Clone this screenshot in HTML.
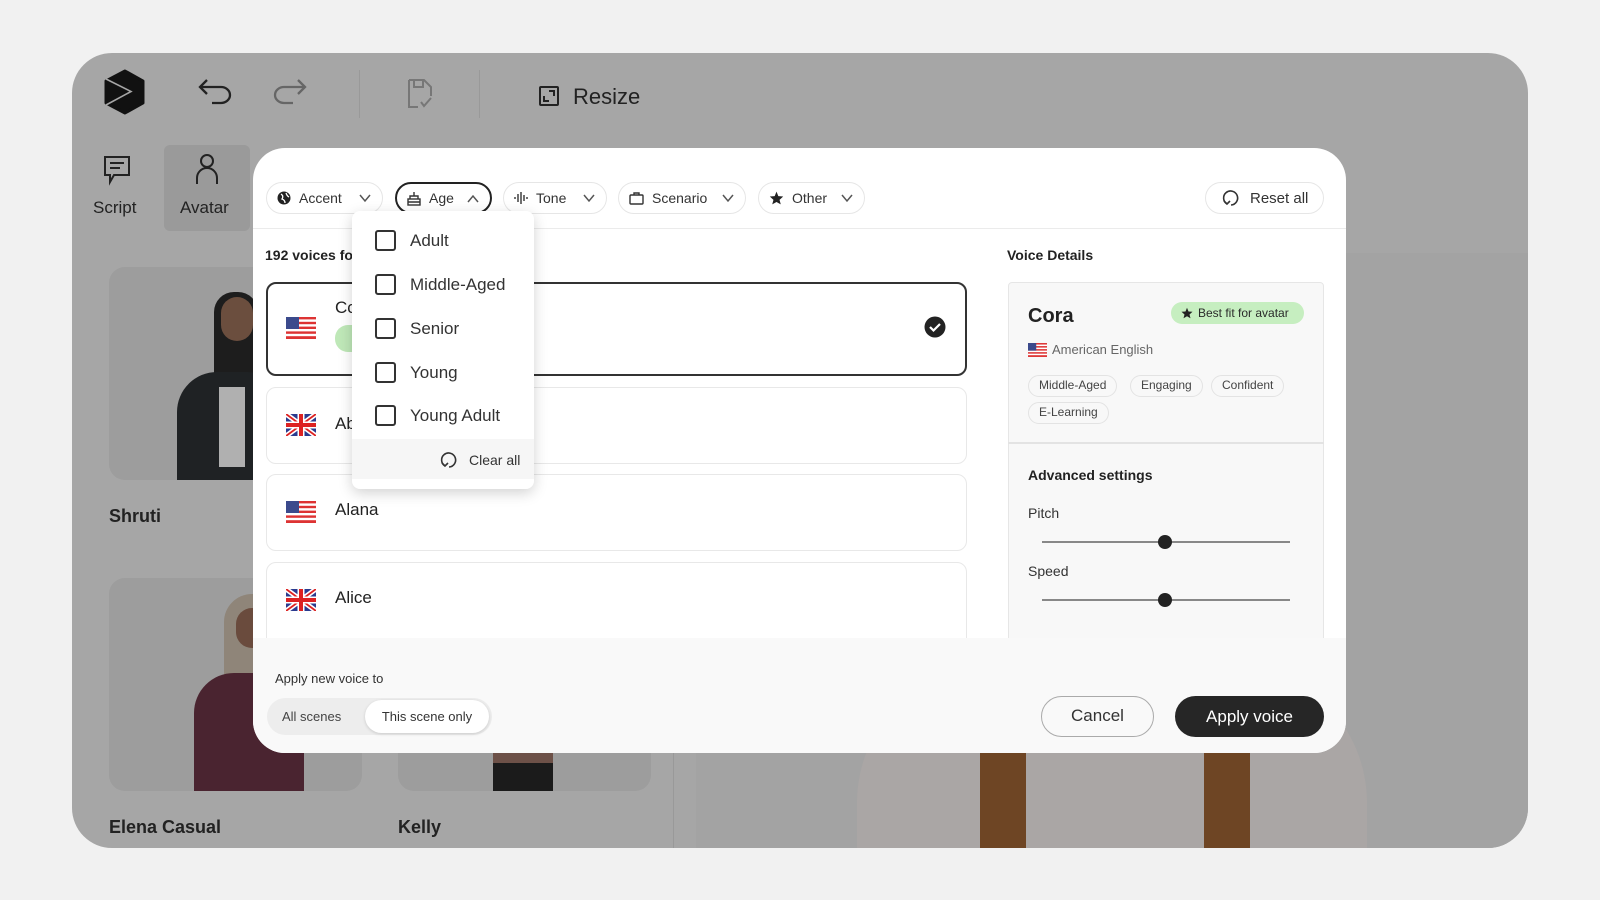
<!DOCTYPE html>
<html><head><meta charset="utf-8"><style>
*{box-sizing:border-box;margin:0;padding:0}
body{width:1600px;height:900px;background:#f1f1f1;font-family:"Liberation Sans",sans-serif;position:relative;overflow:hidden;color:#222}
.a{position:absolute}
.frame{left:72px;top:53px;width:1456px;height:795px;background:#a6a6a6;border-radius:40px;overflow:hidden}
.card{background:#9d9d9d;border-radius:16px}
.nm{font-size:18px;font-weight:bold;color:#222}
.modal{left:253px;top:148px;width:1093px;height:605px;background:#fff;border-radius:32px;overflow:hidden}
.pill{top:34px;height:32px;border:1.5px solid #e6e6e6;border-radius:16px;font-size:14px;color:#333;display:flex;align-items:center;padding-left:10px;gap:8px}
.pill .ch{position:absolute;right:10px;top:9px}
.vc{left:13px;width:701px;border:1.5px solid #e8e8e8;border-radius:10px;background:#fff}
.vn{font-size:17px;color:#222;left:82px}
.flag{left:33px;width:30px;height:22px}
.tag{height:22px;border:1.5px solid #e3e3e3;border-radius:11px;font-size:12px;color:#444;padding:0 10px;line-height:19px;background:#f8f8f8}
.dd{left:352px;top:211px;width:182px;height:278px;background:#fff;border-radius:8px;box-shadow:0 4px 14px rgba(0,0,0,.18);overflow:hidden}
.it{left:23px;font-size:17px;color:#333;display:flex;align-items:center;gap:14px}
.cb{width:21px;height:21px;border:2px solid #333;border-radius:3px}
.sl{height:2px;background:#888;width:248px;left:34px}
.th{width:14px;height:14px;border-radius:7px;background:#222;top:-6px;left:116px}
</style></head><body>
<div class="a frame">
  <svg class="a" style="left:23px;top:9px" width="60" height="60" viewBox="0 0 60 60"><path d="M30 9 L48 19 L48 41 L30 51 L11 41 L11 19 Z" fill="#111" stroke="#111" stroke-width="3" stroke-linejoin="round"/><path d="M11 17 L36 29.5 L11 43" fill="none" stroke="#a6a6a6" stroke-width="1.6"/></svg>
  <svg class="a" style="left:125px;top:24px" width="38" height="28" viewBox="0 0 38 28" fill="none" stroke="#222" stroke-width="2.3"><path d="M10 3 L3 10 L10 17"/><path d="M3 10 H24 a9 8 0 0 1 0 16 H15"/></svg>
  <svg class="a" style="left:198px;top:24px" width="38" height="28" viewBox="0 0 38 28" fill="none" stroke="#666" stroke-width="2.3"><path d="M28 3 L35 10 L28 17"/><path d="M35 10 H14 a9 8 0 0 0 0 16 H23"/></svg>
  <div class="a" style="left:287px;top:17px;width:1px;height:48px;background:#999"></div>
  <svg class="a" style="left:334px;top:25px" width="28" height="32" viewBox="0 0 28 32" fill="none" stroke="#777" stroke-width="2"><path d="M3 2 H18 L25 9 V18 M3 2 V29 H12"/><path d="M8 2 V9 H17 V2"/><path d="M15 24 L18 28 L25 20"/></svg>
  <div class="a" style="left:407px;top:17px;width:1px;height:48px;background:#999"></div>
  <svg class="a" style="left:466px;top:32px" width="22" height="22" viewBox="0 0 22 22" fill="none" stroke="#222" stroke-width="2"><rect x="2" y="2" width="18" height="18" rx="1"/><path d="M6 11 V16 H11 M16 11 V6 H11"/></svg>
  <div class="a" style="left:501px;top:31px;font-size:22px;color:#222">Resize</div>
  <svg class="a" style="left:30px;top:101px" width="30" height="32" viewBox="0 0 30 32" fill="none" stroke="#222" stroke-width="2"><path d="M3 3 H27 V21 H12 L8 28 V21 H3 Z"/><path d="M8 9 H22 M8 14 H18"/></svg>
  <div class="a" style="left:21px;top:145px;font-size:17px;color:#222">Script</div>
  <div class="a" style="left:92px;top:92px;width:86px;height:86px;background:#9a9a9a;border-radius:6px"></div>
  <svg class="a" style="left:122px;top:100px" width="26" height="32" viewBox="0 0 26 32" fill="none" stroke="#222" stroke-width="2"><circle cx="13" cy="8" r="6"/><path d="M3 31 V25 a10 10 0 0 1 20 0 V31"/></svg>
  <div class="a" style="left:108px;top:145px;font-size:17px;color:#222">Avatar</div>
  <div class="a card" style="left:37px;top:214px;width:253px;height:213px;overflow:hidden">
    <div class="a" style="left:105px;top:25px;width:44px;height:120px;border-radius:20px;background:#1d1d1d"></div>
    <div class="a" style="left:112px;top:30px;width:32px;height:44px;border-radius:16px;background:#6b4e3e"></div>
    <div class="a" style="left:68px;top:105px;width:110px;height:120px;border-radius:40px 40px 0 0;background:#1f2224"></div>
    <div class="a" style="left:110px;top:120px;width:26px;height:80px;background:#b0b0b0"></div>
  </div>
  <div class="a nm" style="left:37px;top:453px">Shruti</div>
  <div class="a card" style="left:37px;top:525px;width:253px;height:213px;overflow:hidden">
    <div class="a" style="left:115px;top:16px;width:56px;height:90px;border-radius:28px 28px 10px 10px;background:#8f8579"></div>
    <div class="a" style="left:127px;top:30px;width:32px;height:40px;border-radius:16px;background:#6a4b3d"></div>
    <div class="a" style="left:85px;top:95px;width:110px;height:130px;border-radius:40px 40px 0 0;background:#4a2430"></div>
  </div>
  <div class="a nm" style="left:37px;top:764px">Elena Casual</div>
  <div class="a card" style="left:326px;top:525px;width:253px;height:213px;overflow:hidden">
    <div class="a" style="left:95px;top:150px;width:60px;height:40px;background:#6d5148"></div>
    <div class="a" style="left:95px;top:185px;width:60px;height:30px;background:#1b1b1b"></div>
  </div>
  <div class="a nm" style="left:326px;top:764px">Kelly</div>
  <div class="a" style="left:601px;top:520px;width:1px;height:280px;background:#999"></div>
  <div class="a" style="left:624px;top:200px;width:832px;height:600px;background:#a3a3a3"></div>
  <div class="a" style="left:785px;top:610px;width:510px;height:260px;border-radius:140px 140px 0 0;background:#aaa6a5"></div>
  <div class="a" style="left:908px;top:640px;width:46px;height:200px;background:#6e4524;border-radius:10px"></div>
  <div class="a" style="left:1132px;top:640px;width:46px;height:200px;background:#6e4524;border-radius:10px"></div>
</div>

<div class="a modal">
  <div class="a pill" style="left:13px;width:117px"><svg width="14" height="14" viewBox="0 0 14 14"><circle cx="7" cy="7" r="6.5" fill="#222"/><path d="M4 3 Q7 5 5 8 Q8 9 8 12 M9 2 Q10 5 12 6" stroke="#fff" stroke-width="1.3" fill="none"/></svg>Accent<svg class="ch" width="14" height="12" viewBox="0 0 14 12" fill="none" stroke="#555" stroke-width="1.5"><path d="M2 3 L7 9 L12 3"/></svg></div>
  <div class="a pill" style="left:142px;width:97px;border:2px solid #222"><svg width="14" height="15" viewBox="0 0 14 15" fill="none" stroke="#333" stroke-width="1.4"><rect x="1" y="8" width="12" height="6"/><path d="M3 8 V5 H11 V8 M7 5 V1 M1 11 H13"/></svg>Age<svg class="ch" width="14" height="12" viewBox="0 0 14 12" fill="none" stroke="#555" stroke-width="1.5"><path d="M2 9 L7 3 L12 9"/></svg></div>
  <div class="a pill" style="left:250px;width:104px"><svg width="14" height="14" viewBox="0 0 14 14" stroke="#333" stroke-width="1.4"><path d="M1 6 V8 M4 3 V11 M7 1 V13 M10 4 V10 M13 6 V8"/></svg>Tone<svg class="ch" width="14" height="12" viewBox="0 0 14 12" fill="none" stroke="#555" stroke-width="1.5"><path d="M2 3 L7 9 L12 3"/></svg></div>
  <div class="a pill" style="left:365px;width:128px"><svg width="15" height="13" viewBox="0 0 15 13" fill="none" stroke="#333" stroke-width="1.4"><rect x="1" y="3" width="13" height="9" rx="1"/><path d="M5 3 V1 H10 V3"/></svg>Scenario<svg class="ch" width="14" height="12" viewBox="0 0 14 12" fill="none" stroke="#555" stroke-width="1.5"><path d="M2 3 L7 9 L12 3"/></svg></div>
  <div class="a pill" style="left:505px;width:107px"><svg width="15" height="14" viewBox="0 0 24 23"><path d="M12 1 L15 8.5 L23 9 L17 14.5 L19 22 L12 18 L5 22 L7 14.5 L1 9 L9 8.5Z" fill="#222"/></svg>Other<svg class="ch" width="14" height="12" viewBox="0 0 14 12" fill="none" stroke="#555" stroke-width="1.5"><path d="M2 3 L7 9 L12 3"/></svg></div>
  <div class="a pill" style="left:952px;width:119px;padding-left:16px;font-size:15px;gap:10px"><svg width="18" height="18" viewBox="0 0 18 18" fill="none" stroke="#333" stroke-width="1.6"><path d="M5 15 A7 7 0 1 1 9 16"/><path d="M2 12 L5 15 L8 12"/></svg>Reset all</div>
  <div class="a" style="left:0;top:80px;width:1093px;height:1px;background:#ebebeb"></div>
  <div class="a" style="left:12px;top:99px;font-size:14px;font-weight:bold;color:#222">192 voices fo</div>

  <div class="a vc" style="top:134px;height:94px;border:2px solid #333"></div>
  <svg class="a flag" style="top:169px" viewBox="0 0 30 22"><rect width="30" height="22" fill="#fff"/><g fill="#d33"><rect y="0" width="30" height="2.4"/><rect y="4.8" width="30" height="2.4"/><rect y="9.6" width="30" height="2.4"/><rect y="14.4" width="30" height="2.4"/><rect y="19.2" width="30" height="2.8"/></g><rect width="13" height="12" fill="#3b4a8c"/></svg>
  <div class="a vn" style="top:150px">Co</div>
  <div class="a" style="left:82px;top:177px;width:20px;height:27px;border-radius:13px 0 0 13px;background:#bfe8b8"></div>
  <svg class="a" style="left:671px;top:168px" width="22" height="22" viewBox="0 0 22 22"><circle cx="11" cy="11" r="10.5" fill="#222"/><path d="M6 11 L9.5 14.5 L16 8" stroke="#fff" stroke-width="2.2" fill="none"/></svg>

  <div class="a vc" style="top:239px;height:77px"></div>
  <svg class="a flag" style="top:266px" viewBox="0 0 30 22"><rect width="30" height="22" fill="#2a3b8f"/><path d="M0 0 L30 22 M30 0 L0 22" stroke="#fff" stroke-width="5"/><path d="M0 0 L30 22 M30 0 L0 22" stroke="#d22" stroke-width="1.8"/><path d="M15 0 V22 M0 11 H30" stroke="#fff" stroke-width="7"/><path d="M15 0 V22 M0 11 H30" stroke="#d22" stroke-width="4"/></svg>
  <div class="a vn" style="top:266px">Ab</div>

  <div class="a vc" style="top:326px;height:77px"></div>
  <svg class="a flag" style="top:353px" viewBox="0 0 30 22"><rect width="30" height="22" fill="#fff"/><g fill="#d33"><rect y="0" width="30" height="2.4"/><rect y="4.8" width="30" height="2.4"/><rect y="9.6" width="30" height="2.4"/><rect y="14.4" width="30" height="2.4"/><rect y="19.2" width="30" height="2.8"/></g><rect width="13" height="12" fill="#3b4a8c"/></svg>
  <div class="a vn" style="top:352px">Alana</div>

  <div class="a vc" style="top:414px;height:100px"></div>
  <svg class="a flag" style="top:441px" viewBox="0 0 30 22"><rect width="30" height="22" fill="#2a3b8f"/><path d="M0 0 L30 22 M30 0 L0 22" stroke="#fff" stroke-width="5"/><path d="M0 0 L30 22 M30 0 L0 22" stroke="#d22" stroke-width="1.8"/><path d="M15 0 V22 M0 11 H30" stroke="#fff" stroke-width="7"/><path d="M15 0 V22 M0 11 H30" stroke="#d22" stroke-width="4"/></svg>
  <div class="a vn" style="top:440px">Alice</div>

  <div class="a" style="left:754px;top:99px;font-size:14px;font-weight:bold;color:#222">Voice Details</div>
  <div class="a" style="left:755px;top:134px;width:316px;height:400px;background:#f8f8f8;border:1.5px solid #e6e6e6;border-radius:4px"></div>
  <div class="a" style="left:755px;top:294px;width:316px;height:1.5px;background:#e3e3e3"></div>
  <div class="a" style="left:775px;top:157px;font-size:20px;font-weight:bold;color:#222">Cora</div>
  <div class="a" style="left:918px;top:154px;width:133px;height:22px;background:#c6eec0;border-radius:11px;font-size:12px;color:#2a2a2a;line-height:22px;padding-left:27px">Best fit for avatar<svg class="a" style="left:10px;top:5px" width="12" height="12" viewBox="0 0 24 23"><path d="M12 1 L15 8.5 L23 9 L17 14.5 L19 22 L12 18 L5 22 L7 14.5 L1 9 L9 8.5Z" fill="#222"/></svg></div>
  <svg class="a" style="left:775px;top:195px" width="19" height="14" viewBox="0 0 30 22"><rect width="30" height="22" fill="#fff"/><g fill="#d33"><rect y="0" width="30" height="2.4"/><rect y="4.8" width="30" height="2.4"/><rect y="9.6" width="30" height="2.4"/><rect y="14.4" width="30" height="2.4"/><rect y="19.2" width="30" height="2.8"/></g><rect width="13" height="12" fill="#3b4a8c"/></svg>
  <div class="a" style="left:799px;top:194px;font-size:13px;color:#666">American English</div>
  <div class="a tag" style="left:775px;top:227px">Middle-Aged</div>
  <div class="a tag" style="left:877px;top:227px">Engaging</div>
  <div class="a tag" style="left:958px;top:227px">Confident</div>
  <div class="a tag" style="left:775px;top:254px">E-Learning</div>
  <div class="a" style="left:775px;top:319px;font-size:14px;font-weight:bold;color:#222">Advanced settings</div>
  <div class="a" style="left:775px;top:357px;font-size:14px;color:#333">Pitch</div>
  <div class="a sl" style="left:789px;top:393px"><div class="a th"></div></div>
  <div class="a" style="left:775px;top:415px;font-size:14px;color:#333">Speed</div>
  <div class="a sl" style="left:789px;top:451px"><div class="a th"></div></div>

  <div class="a" style="left:0;top:490px;width:1093px;height:115px;background:#f9f9f9"></div>
  <div class="a" style="left:22px;top:523px;font-size:13px;color:#333">Apply new voice to</div>
  <div class="a" style="left:14px;top:550px;width:225px;height:37px;background:#ededed;border-radius:19px"></div>
  <div class="a" style="left:29px;top:561px;font-size:13px;color:#444">All scenes</div>
  <div class="a" style="left:112px;top:552px;width:124px;height:33px;background:#fff;border-radius:17px;box-shadow:0 1px 3px rgba(0,0,0,.15);font-size:13px;color:#333;line-height:33px;text-align:center">This scene only</div>
  <div class="a" style="left:788px;top:548px;width:113px;height:41px;border:1.5px solid #aaa;border-radius:21px;font-size:17px;color:#333;line-height:38px;text-align:center">Cancel</div>
  <div class="a" style="left:922px;top:548px;width:149px;height:41px;background:#262626;border-radius:21px;font-size:17px;color:#fff;line-height:41px;text-align:center">Apply voice</div>
</div>

<div class="a dd">
  <div class="a it" style="top:19px"><div class="cb"></div>Adult</div>
  <div class="a it" style="top:63px"><div class="cb"></div>Middle-Aged</div>
  <div class="a it" style="top:107px"><div class="cb"></div>Senior</div>
  <div class="a it" style="top:151px"><div class="cb"></div>Young</div>
  <div class="a it" style="top:194px"><div class="cb"></div>Young Adult</div>
  <div class="a" style="left:0;top:228px;width:182px;height:40px;background:#f6f6f6"></div>
  <svg class="a" style="left:88px;top:240px" width="18" height="18" viewBox="0 0 18 18" fill="none" stroke="#333" stroke-width="1.6"><path d="M5 15 A7 7 0 1 1 9 16"/><path d="M2 12 L5 15 L8 12"/></svg>
  <div class="a" style="left:117px;top:241px;font-size:14px;color:#333">Clear all</div>
</div>
</body></html>
